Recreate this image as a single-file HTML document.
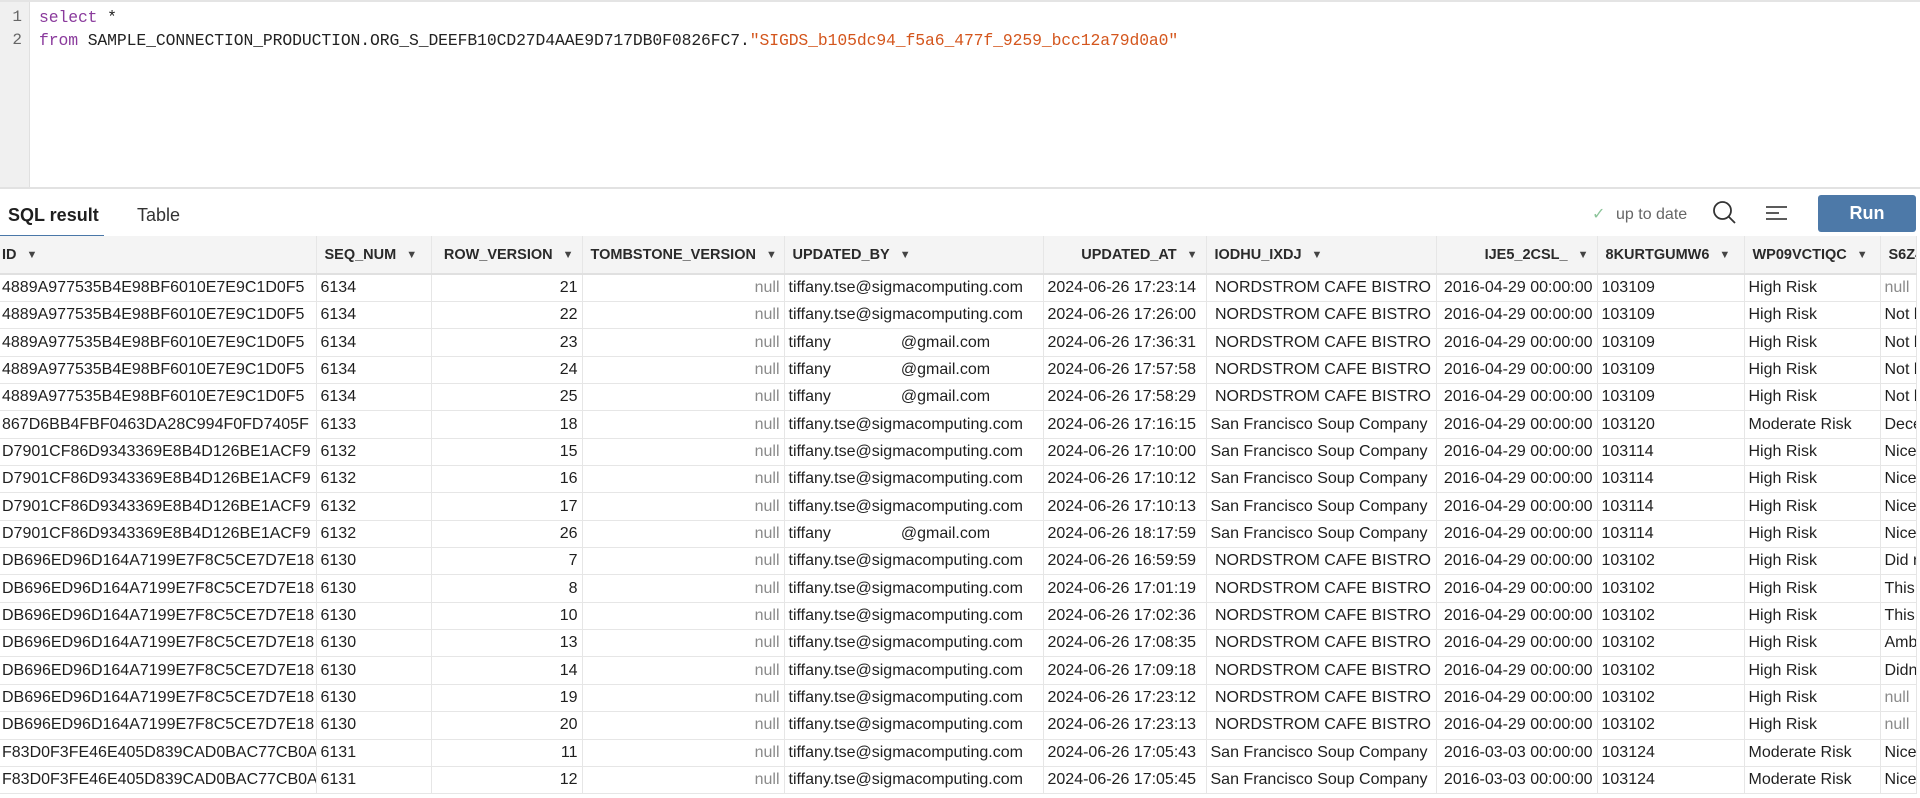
<!DOCTYPE html>
<html><head><meta charset="utf-8"><style>
*{margin:0;padding:0;box-sizing:border-box}
body{width:1920px;height:798px;overflow:hidden;background:#fff;font-family:"Liberation Sans",Arial,sans-serif;color:#1f1f1f;position:relative}
.topline{position:absolute;left:0;top:0;width:1920px;height:2px;background:#e4e4e4}
.gutter{position:absolute;left:0;top:2px;width:30px;height:185px;background:#f0f0f0;border-right:1px solid #e0e0e0}
.ln{position:absolute;left:0;width:22px;text-align:right;font-family:"Liberation Mono",monospace;font-size:16px;color:#666}
.code{position:absolute;left:39px;font-family:"Liberation Mono",monospace;font-size:16.4px;white-space:pre;color:#222;letter-spacing:-0.1px}
.kw{color:#8a3a9c}.str{color:#d4561d}
.edb{position:absolute;left:0;top:187px;width:1920px;height:2px;background:#e2e2e2}
.tab{position:absolute;top:205px;font-size:18px}
.ul{position:absolute;left:0;top:235px;width:104px;height:3px;background:#4a77a8}
.tb{position:absolute;top:205px;font-size:16px;color:#555}
.run{position:absolute;left:1818px;top:195px;width:98px;height:37px;background:#4d79a8;border-radius:3px;color:#fff;font-size:18px;font-weight:bold;text-align:center;line-height:37px}
table{position:absolute;left:0;top:236px;border-collapse:collapse;table-layout:fixed;width:1916px}
td,th{height:27.35px;padding:0 4px;font-size:16px;white-space:nowrap;overflow:hidden;border:1px solid #e6e6e6;border-top:none;border-left:none;line-height:26px}
th{height:38px;background:#f4f4f4;font-weight:bold;font-size:14.5px;color:#2a2a2a;text-align:left;padding:0 8px;border-bottom:2px solid #e0e0e0}
th .a{font-size:11px;margin-left:10px;color:#444;vertical-align:1px}
.r{text-align:right}.n{color:#8a8a8a;text-align:right}
.g{display:inline-block;width:70px}
</style></head><body>
<div class="topline"></div>
<div class="gutter"></div>
<div class="ln" style="top:8px">1</div>
<div class="ln" style="top:31px">2</div>
<div class="code" style="top:8px"><span class="kw">select</span> *</div>
<div class="code" style="top:31px"><span class="kw">from</span> SAMPLE_CONNECTION_PRODUCTION.ORG_S_DEEFB10CD27D4AAE9D717DB0F0826FC7.<span class="str">"SIGDS_b105dc94_f5a6_477f_9259_bcc12a79d0a0"</span></div>
<div class="edb"></div>
<div class="tab" style="left:8px;font-weight:bold">SQL result</div>
<div class="tab" style="left:137px;color:#333">Table</div>
<div class="ul"></div>
<div class="tb" style="left:1592px;top:204px;color:#8cc49a;font-size:16px">✓</div>
<div class="tb" style="left:1616px;top:206px;font-size:16px;color:#666">up to date</div>
<svg style="position:absolute;left:1712px;top:200px" width="26" height="26" viewBox="0 0 26 26" fill="none" stroke="#333" stroke-width="1.8"><circle cx="10.5" cy="10.5" r="8.5"/><path d="M16.5 16.5L23 23"/></svg>
<svg style="position:absolute;left:1765px;top:205px" width="24" height="16" viewBox="0 0 24 16" stroke="#444" stroke-width="1.8"><path d="M1 2H22M1 8H14M1 14H22"/></svg>
<div class="run">Run</div>
<table>
<colgroup><col style="width:316px"><col style="width:115px"><col style="width:151px"><col style="width:202px"><col style="width:259px"><col style="width:163px"><col style="width:230px"><col style="width:161px"><col style="width:147px"><col style="width:136px"><col style="width:36px"></colgroup>
<tr><th style="padding-left:2px">ID<span class="a">▼</span></th><th>SEQ_NUM<span class="a">▼</span></th><th class="r">ROW_VERSION<span class="a">▼</span></th><th>TOMBSTONE_VERSION<span class="a">▼</span></th><th>UPDATED_BY<span class="a">▼</span></th><th class="r">UPDATED_AT<span class="a">▼</span></th><th>IODHU_IXDJ<span class="a">▼</span></th><th class="r">IJE5_2CSL_<span class="a">▼</span></th><th>8KURTGUMW6<span class="a">▼</span></th><th>WP09VCTIQC<span class="a">▼</span></th><th>S6Z4</th></tr>
<tr><td style="padding-left:2px">4889A977535B4E98BF6010E7E9C1D0F5</td><td>6134</td><td class="r">21</td><td class="n">null</td><td>tiffany.tse@sigmacomputing.com</td><td>2024-06-26 17:23:14</td><td>&nbsp;NORDSTROM CAFE BISTRO</td><td class="r">2016-04-29 00:00:00</td><td>103109</td><td>High Risk</td><td class="n" style="text-align:left">null</td></tr>
<tr><td style="padding-left:2px">4889A977535B4E98BF6010E7E9C1D0F5</td><td>6134</td><td class="r">22</td><td class="n">null</td><td>tiffany.tse@sigmacomputing.com</td><td>2024-06-26 17:26:00</td><td>&nbsp;NORDSTROM CAFE BISTRO</td><td class="r">2016-04-29 00:00:00</td><td>103109</td><td>High Risk</td><td>Not bad</td></tr>
<tr><td style="padding-left:2px">4889A977535B4E98BF6010E7E9C1D0F5</td><td>6134</td><td class="r">23</td><td class="n">null</td><td>tiffany<span class="g"></span>@gmail.com</td><td>2024-06-26 17:36:31</td><td>&nbsp;NORDSTROM CAFE BISTRO</td><td class="r">2016-04-29 00:00:00</td><td>103109</td><td>High Risk</td><td>Not bad</td></tr>
<tr><td style="padding-left:2px">4889A977535B4E98BF6010E7E9C1D0F5</td><td>6134</td><td class="r">24</td><td class="n">null</td><td>tiffany<span class="g"></span>@gmail.com</td><td>2024-06-26 17:57:58</td><td>&nbsp;NORDSTROM CAFE BISTRO</td><td class="r">2016-04-29 00:00:00</td><td>103109</td><td>High Risk</td><td>Not bad</td></tr>
<tr><td style="padding-left:2px">4889A977535B4E98BF6010E7E9C1D0F5</td><td>6134</td><td class="r">25</td><td class="n">null</td><td>tiffany<span class="g"></span>@gmail.com</td><td>2024-06-26 17:58:29</td><td>&nbsp;NORDSTROM CAFE BISTRO</td><td class="r">2016-04-29 00:00:00</td><td>103109</td><td>High Risk</td><td>Not bad</td></tr>
<tr><td style="padding-left:2px">867D6BB4FBF0463DA28C994F0FD7405F</td><td>6133</td><td class="r">18</td><td class="n">null</td><td>tiffany.tse@sigmacomputing.com</td><td>2024-06-26 17:16:15</td><td>San Francisco Soup Company</td><td class="r">2016-04-29 00:00:00</td><td>103120</td><td>Moderate Risk</td><td>Decent</td></tr>
<tr><td style="padding-left:2px">D7901CF86D9343369E8B4D126BE1ACF9</td><td>6132</td><td class="r">15</td><td class="n">null</td><td>tiffany.tse@sigmacomputing.com</td><td>2024-06-26 17:10:00</td><td>San Francisco Soup Company</td><td class="r">2016-04-29 00:00:00</td><td>103114</td><td>High Risk</td><td>Nice</td></tr>
<tr><td style="padding-left:2px">D7901CF86D9343369E8B4D126BE1ACF9</td><td>6132</td><td class="r">16</td><td class="n">null</td><td>tiffany.tse@sigmacomputing.com</td><td>2024-06-26 17:10:12</td><td>San Francisco Soup Company</td><td class="r">2016-04-29 00:00:00</td><td>103114</td><td>High Risk</td><td>Nice</td></tr>
<tr><td style="padding-left:2px">D7901CF86D9343369E8B4D126BE1ACF9</td><td>6132</td><td class="r">17</td><td class="n">null</td><td>tiffany.tse@sigmacomputing.com</td><td>2024-06-26 17:10:13</td><td>San Francisco Soup Company</td><td class="r">2016-04-29 00:00:00</td><td>103114</td><td>High Risk</td><td>Nice</td></tr>
<tr><td style="padding-left:2px">D7901CF86D9343369E8B4D126BE1ACF9</td><td>6132</td><td class="r">26</td><td class="n">null</td><td>tiffany<span class="g"></span>@gmail.com</td><td>2024-06-26 18:17:59</td><td>San Francisco Soup Company</td><td class="r">2016-04-29 00:00:00</td><td>103114</td><td>High Risk</td><td>Nice</td></tr>
<tr><td style="padding-left:2px">DB696ED96D164A7199E7F8C5CE7D7E18</td><td>6130</td><td class="r">7</td><td class="n">null</td><td>tiffany.tse@sigmacomputing.com</td><td>2024-06-26 16:59:59</td><td>&nbsp;NORDSTROM CAFE BISTRO</td><td class="r">2016-04-29 00:00:00</td><td>103102</td><td>High Risk</td><td>Did not</td></tr>
<tr><td style="padding-left:2px">DB696ED96D164A7199E7F8C5CE7D7E18</td><td>6130</td><td class="r">8</td><td class="n">null</td><td>tiffany.tse@sigmacomputing.com</td><td>2024-06-26 17:01:19</td><td>&nbsp;NORDSTROM CAFE BISTRO</td><td class="r">2016-04-29 00:00:00</td><td>103102</td><td>High Risk</td><td>This is</td></tr>
<tr><td style="padding-left:2px">DB696ED96D164A7199E7F8C5CE7D7E18</td><td>6130</td><td class="r">10</td><td class="n">null</td><td>tiffany.tse@sigmacomputing.com</td><td>2024-06-26 17:02:36</td><td>&nbsp;NORDSTROM CAFE BISTRO</td><td class="r">2016-04-29 00:00:00</td><td>103102</td><td>High Risk</td><td>This is</td></tr>
<tr><td style="padding-left:2px">DB696ED96D164A7199E7F8C5CE7D7E18</td><td>6130</td><td class="r">13</td><td class="n">null</td><td>tiffany.tse@sigmacomputing.com</td><td>2024-06-26 17:08:35</td><td>&nbsp;NORDSTROM CAFE BISTRO</td><td class="r">2016-04-29 00:00:00</td><td>103102</td><td>High Risk</td><td>Ambience</td></tr>
<tr><td style="padding-left:2px">DB696ED96D164A7199E7F8C5CE7D7E18</td><td>6130</td><td class="r">14</td><td class="n">null</td><td>tiffany.tse@sigmacomputing.com</td><td>2024-06-26 17:09:18</td><td>&nbsp;NORDSTROM CAFE BISTRO</td><td class="r">2016-04-29 00:00:00</td><td>103102</td><td>High Risk</td><td>Didn't</td></tr>
<tr><td style="padding-left:2px">DB696ED96D164A7199E7F8C5CE7D7E18</td><td>6130</td><td class="r">19</td><td class="n">null</td><td>tiffany.tse@sigmacomputing.com</td><td>2024-06-26 17:23:12</td><td>&nbsp;NORDSTROM CAFE BISTRO</td><td class="r">2016-04-29 00:00:00</td><td>103102</td><td>High Risk</td><td class="n" style="text-align:left">null</td></tr>
<tr><td style="padding-left:2px">DB696ED96D164A7199E7F8C5CE7D7E18</td><td>6130</td><td class="r">20</td><td class="n">null</td><td>tiffany.tse@sigmacomputing.com</td><td>2024-06-26 17:23:13</td><td>&nbsp;NORDSTROM CAFE BISTRO</td><td class="r">2016-04-29 00:00:00</td><td>103102</td><td>High Risk</td><td class="n" style="text-align:left">null</td></tr>
<tr><td style="padding-left:2px">F83D0F3FE46E405D839CAD0BAC77CB0A</td><td>6131</td><td class="r">11</td><td class="n">null</td><td>tiffany.tse@sigmacomputing.com</td><td>2024-06-26 17:05:43</td><td>San Francisco Soup Company</td><td class="r">2016-03-03 00:00:00</td><td>103124</td><td>Moderate Risk</td><td>Nice</td></tr>
<tr><td style="padding-left:2px">F83D0F3FE46E405D839CAD0BAC77CB0A</td><td>6131</td><td class="r">12</td><td class="n">null</td><td>tiffany.tse@sigmacomputing.com</td><td>2024-06-26 17:05:45</td><td>San Francisco Soup Company</td><td class="r">2016-03-03 00:00:00</td><td>103124</td><td>Moderate Risk</td><td>Nice</td></tr>
</table>
</body></html>
